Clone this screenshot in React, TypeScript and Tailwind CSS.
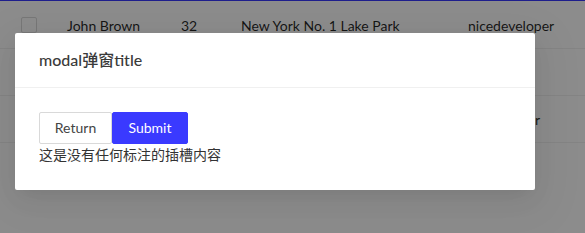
const rows = [
  { name: 'John Brown', age: 32, address: 'New York No. 1 Lake Park', tags: 'nicedeveloper' },
  { name: 'Jim Green', age: 42, address: 'London No. 1 Lake Park', tags: 'loser' },
  { name: 'Joe Black', age: 32, address: 'Sidney No. 1 Lake Park', tags: 'coolteacher' },
]

const font = { fontFamily: 'Lato, "Noto Sans CJK SC", sans-serif' }

export default function App() {
  return (
    <div className="relative h-[233px] w-[585px] overflow-hidden bg-white" style={font}>
      {/* Table behind the mask */}
      <div className="border-t border-[#3838ff] pt-px text-[14px] text-[#000000d9]">
        {rows.map((row) => (
          <div
            key={row.name}
            className="grid h-[47px] grid-cols-[51px_114px_60px_227px_1fr] items-center border-b border-[#f0f0f0]"
          >
            <div className="pl-[21px]">
              <span className="block h-4 w-4 rounded-[2px] border border-[#d9d9d9] bg-white" />
            </div>
            <div className="px-4">{row.name}</div>
            <div className="px-4">{row.age}</div>
            <div className="whitespace-nowrap px-4">{row.address}</div>
            <div className="whitespace-nowrap px-4">{row.tags}</div>
          </div>
        ))}
      </div>

      {/* Mask */}
      <div className="absolute inset-0 bg-[#00000073]" />

      {/* Modal */}
      <div className="absolute left-[15px] top-[33px] w-[520px] rounded-[2px] bg-white shadow-[0_6px_16px_-8px_rgba(0,0,0,0.08),0_9px_28px_0_rgba(0,0,0,0.05),0_12px_48px_16px_rgba(0,0,0,0.03)]">
        <div className="border-b border-[#f0f0f0] px-6 py-4">
          <div className="text-[16px] font-medium leading-[22px] text-[#3a3a3a]">modal弹窗title</div>
        </div>
        <div className="p-6 text-[14px] leading-[22px] text-[#333]">
          <div className="flex">
            <button className="h-8 w-[73px] rounded-[2px] border border-[#d9d9d9] bg-white text-[14px] text-[#444]">
              Return
            </button>
            <button className="h-8 w-[76px] rounded-[2px] border border-[#3a3aff] bg-[#3a3aff] text-[14px] text-white">
              Submit
            </button>
          </div>
          <p>这是没有任何标注的插槽内容</p>
        </div>
      </div>
    </div>
  )
}
